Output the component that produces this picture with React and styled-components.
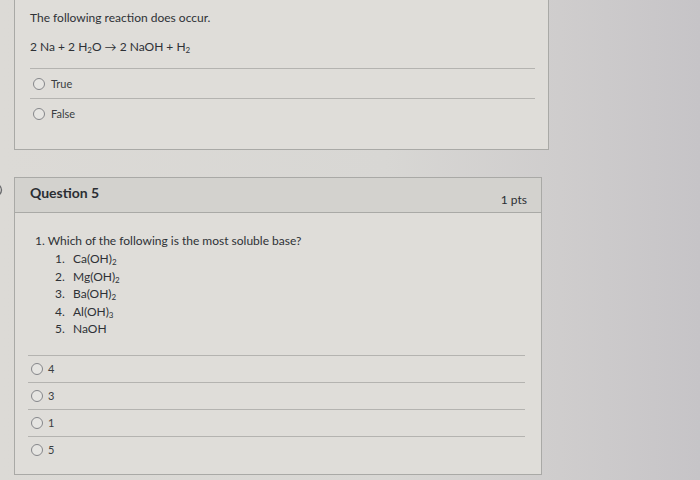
import React from 'react';
import styled, { createGlobalStyle } from 'styled-components';

const Global = createGlobalStyle`
    html, body {
        margin:0;
        padding:0;
        height:100%;
    }
    body {
        background:linear-gradient(90deg, #dcdad6 0%, #d8d7d4 55%, #cfcdcd 80%, #c6c4c7 100%);
        font-family:Lato, "Open Sans", sans-serif;
        color:#2e3136;
        overflow:hidden;
    }
`;

const Page = styled.div`
    display:flex;
    flex-direction:column;
    gap:27px;
`;

const Row = styled.div`
    display:flex;
    align-items:flex-start;
`;

const Gutter = styled.div`
    width:14px;
    flex:none;
    display:flex;
    justify-content:flex-start;
    padding-top:${p => p.$top || 0}px;
`;

const Card = styled.div`
    width:${p => p.$width}px;
    margin-top:${p => p.$offset || 0}px;
    border:1px solid #a9a9a6;
    background:#dfddd9;
    box-sizing:border-box;
`;

const Header = styled.div`
    display:flex;
    align-items:center;
    justify-content:space-between;
    height:35px;
    padding:0 14px 0 15px;
    background:#d3d2ce;
    border-bottom:1px solid #a9a9a6;
    box-sizing:border-box;
`;

const Title = styled.div`
    font-size:14px;
    font-weight:700;
    color:#2b2e33;
    margin-top:-5px;
`;

const Points = styled.div`
    font-size:12px;
    color:#2b2e33;
    margin-top:8px;
`;

const Body = styled.div`
    padding:${p => p.$pad};
`;

const Text = styled.div`
    font-size:12px;
    line-height:18px;
    padding-left:${p => p.$indent || 0}px;
    margin-bottom:${p => p.$mb || 0}px;
`;

const Sub = styled.sub`
    font-size:8px;
    vertical-align:-2px;
    line-height:0;
`;

const List = styled.div`
    display:grid;
    grid-template-columns:18px auto;
    padding-left:27px;
    font-size:12px;
    line-height:17.5px;
`;

const Answers = styled.div`
    margin:${p => p.$margin};
`;

const Answer = styled.div`
    display:flex;
    align-items:center;
    gap:${p => p.$gap}px;
    height:${p => p.$h}px;
    padding-left:${p => p.$indent}px;
    border-top:1px solid #b4b3b0;
    font-size:${p => p.$size}px;
    color:#3a3d42;
    box-sizing:border-box;
`;

const Radio = styled.span`
    width:10px;
    height:10px;
    border-radius:50%;
    border:1px solid #85868a;
    background:#e6e5e2;
    flex:none;
`;

const Chem = ({ base, sub }) => <>{base}<Sub>{sub}</Sub></>;

const Chevron = () => (
    <svg width="6" height="14" viewBox="0 0 6 14">
        <path d="M-2 1 Q5 7 -2 13" fill="none" stroke="#6a6b6e" strokeWidth="1.4" />
    </svg>
);

const bases = [
    ['1.', <>Ca(OH)<Sub>2</Sub></>],
    ['2.', <>Mg(OH)<Sub>2</Sub></>],
    ['3.', <>Ba(OH)<Sub>2</Sub></>],
    ['4.', <>Al(OH)<Sub>3</Sub></>],
    ['5.', 'NaOH'],
];

export default function App() {
    return <>
        <Global />
        <Page>
            <Row>
                <Gutter />
                <Card $width={535} $offset={-10}>
                    <Body $pad="18px 14px 21px 15px">
                        <Text $mb={11}>The following reaction does occur.</Text>
                        <Text $mb={12}>
                            2 Na + 2 <Chem base="H" sub="2" />O → 2 NaOH + <Chem base="H" sub="2" />
                        </Text>
                        <Answers $margin="0 -1px 0 0">
                            <Answer $h={30} $gap={6} $indent={3} $size={11}><Radio />True</Answer>
                            <Answer $h={30} $gap={6} $indent={3} $size={11}><Radio />False</Answer>
                        </Answers>
                    </Body>
                </Card>
            </Row>
            <Row>
                <Gutter $top={6}><Chevron /></Gutter>
                <Card $width={528}>
                    <Header>
                        <Title>Question 5</Title>
                        <Points>1 pts</Points>
                    </Header>
                    <Body $pad="19px 16px 11px 13px">
                        <Text $indent={7}>1. Which of the following is the most soluble base?</Text>
                        <List>
                            {bases.map(([n, b]) => <React.Fragment key={n}><span>{n}</span><span>{b}</span></React.Fragment>)}
                        </List>
                        <Answers $margin="17px 0 0 0">
                            {['4', '3', '1', '5'].map(v =>
                                <Answer key={v} $h={27} $gap={5} $indent={3} $size={11}><Radio />{v}</Answer>
                            )}
                        </Answers>
                    </Body>
                </Card>
            </Row>
        </Page>
    </>;
}
